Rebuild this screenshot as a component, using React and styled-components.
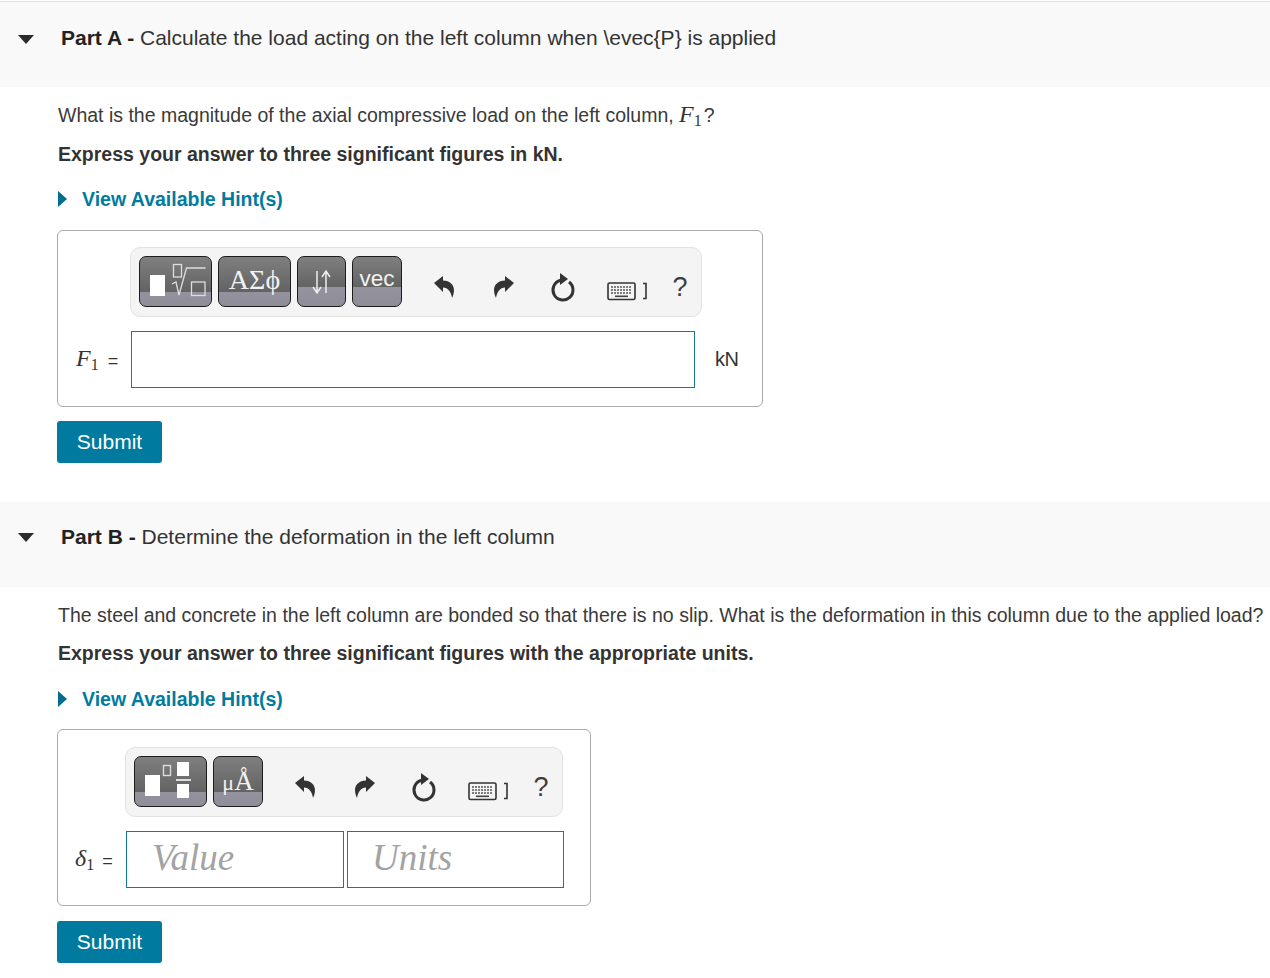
import React from "react";
import styled, { createGlobalStyle } from "styled-components";

const GlobalStyle = createGlobalStyle`
  html, body {
    margin: 0;
    padding: 0;
    background: #fff;
    font-family: "Liberation Sans", Arial, sans-serif;
    color: #333;
  }
`;

const Page = styled.div`
  width: 1270px;
  height: 978px;
  overflow: hidden;
  padding-top: 1px;
  box-sizing: border-box;
`;

const PartSection = styled.section`
  margin-bottom: ${({ $gap }) => $gap}px;
`;

const PartHeader = styled.div`
  display: flex;
  align-items: flex-start;
  height: ${({ $height }) => $height}px;
  box-sizing: border-box;
  padding: ${({ $top }) => $top}px 0 0 18px;
  background: #f9f9f9;
  border-top: ${({ $line }) => ($line ? "1px solid #e2e2e2" : "none")};
`;

const Caret = styled.span`
  width: 0;
  height: 0;
  margin: ${({ $caretTop }) => $caretTop}px 27px 0 0;
  border-left: 8.5px solid transparent;
  border-right: 8.5px solid transparent;
  border-top: 9px solid #2b2b2b;
`;

const PartTitle = styled.h2`
  margin: 0;
  font-size: 21px;
  line-height: 26px;
  font-weight: 400;
  color: #333;
  b {
    color: #222;
  }
`;

const PartBody = styled.div`
  padding: 14px 0 0 57px;
`;

const Prompt = styled.p`
  margin: 0 0 0 1px;
  height: ${({ $height }) => $height}px;
  font-size: 19.5px;
  line-height: 28px;
  white-space: nowrap;
  color: #3a3a3a;
`;

const Instruction = styled.p`
  margin: 0 0 0 1px;
  height: ${({ $height }) => $height}px;
  font-size: 19.5px;
  line-height: 28px;
  font-weight: 700;
  color: #333;
`;

const HintLink = styled.div`
  display: flex;
  align-items: center;
  height: 28px;
  margin: 0 0 ${({ $after }) => $after}px 1px;
  font-size: 19.5px;
  font-weight: 700;
  color: #007c9f;
  &::before {
    content: "";
    width: 0;
    height: 0;
    margin-right: 15px;
    border-top: 8px solid transparent;
    border-bottom: 8px solid transparent;
    border-left: 9px solid #006d8f;
  }
`;

const AnswerBox = styled.div`
  width: ${({ $width }) => $width}px;
  height: 177px;
  box-sizing: border-box;
  padding: ${({ $top }) => $top}px 0 0 ${({ $left }) => $left}px;
  border: 1px solid #a9a9a9;
  border-radius: 6px;
`;

const Toolbar = styled.div`
  display: flex;
  align-items: flex-start;
  width: ${({ $width }) => $width}px;
  height: 70px;
  box-sizing: border-box;
  padding: 8px 0 0 8px;
  margin: 0 0 14px ${({ $indent }) => $indent}px;
  background: #f4f4f4;
  border: 1px solid #e2e2e2;
  border-radius: 10px;
`;

const ToolGroup = styled.div`
  display: flex;
  gap: 6px;
  margin-right: 12px;
`;

const ToolButton = styled.div`
  display: flex;
  flex: none;
  align-items: center;
  justify-content: center;
  width: ${({ $width }) => $width}px;
  height: 51px;
  box-sizing: border-box;
  border: 1px solid #1d1d1d;
  border-radius: 7px;
  color: #f2f2f2;
  background: linear-gradient(
    to bottom,
    #7f7f7f 0,
    #636363 ${({ $split }) => $split}px,
    #94929e ${({ $split }) => $split}px,
    #8f8d98 100%
  );
`;

const ButtonText = styled.span`
  padding-bottom: ${({ $lift }) => $lift}px;
  font-family: ${({ $sans }) => ($sans ? '"Liberation Sans", sans-serif' : '"Liberation Serif", serif')};
  font-size: ${({ $size }) => $size}px;
  line-height: 1;
  small {
    font-size: 22px;
  }
`;

const ToolAction = styled.div`
  display: flex;
  flex: none;
  align-items: center;
  justify-content: center;
  width: ${({ $width }) => $width}px;
  height: 51px;
  padding-top: ${({ $drop }) => $drop}px;
  box-sizing: border-box;
  color: #3d3d3d;
  font-size: 27px;
`;

const InputRow = styled.div`
  display: flex;
  align-items: center;
`;

const MathVar = styled.span`
  margin-right: 2px;
  font-family: "Liberation Serif", serif;
  font-size: 24px;
  line-height: 0;
  font-style: italic;
  color: #333;
  sub {
    font-style: normal;
    font-size: 16px;
    line-height: 0;
    vertical-align: -4px;
  }
`;

const VarLabel = styled.div`
  display: flex;
  align-items: center;
  width: ${({ $width }) => $width}px;
  padding-top: 3px;
  box-sizing: border-box;
  span + span {
    font-family: "Liberation Sans", sans-serif;
    font-size: 18px;
    margin-left: ${({ $eqGap }) => $eqGap}px;
    color: #333;
  }
`;

const AnswerField = styled.div`
  display: flex;
  align-items: center;
  width: ${({ $width }) => $width}px;
  height: 57px;
  box-sizing: border-box;
  padding: 0 0 5px ${({ $pad }) => $pad || 0}px;
  border: 1px solid #14799a;
  margin-right: ${({ $after }) => $after || 0}px;
  font-family: "Liberation Serif", serif;
  font-style: italic;
  font-size: 37px;
  color: #a3a3a3;
`;

const UnitLabel = styled.span`
  margin-left: 20px;
  font-size: 20px;
  letter-spacing: -0.5px;
  color: #333;
`;

const SubmitButton = styled.button`
  display: block;
  width: 105px;
  height: 42px;
  margin-top: ${({ $top }) => $top}px;
  padding: 0;
  border: none;
  border-radius: 3px;
  background: #007a9e;
  color: #fff;
  font-family: "Liberation Sans", sans-serif;
  font-size: 21px;
`;

const TemplatesIcon = () => (
  <svg width="71" height="49" viewBox="0 0 71 49">
    <rect x="10" y="18" width="15" height="21" fill="#fff" />
    <rect x="33.5" y="7.5" width="8" height="12.5" fill="none" stroke="#ddd" strokeWidth="1.3" />
    <path d="M32 27 L36 25 L39 38 L46.5 11 H65.5" fill="none" stroke="#ddd" strokeWidth="1.3" />
    <rect x="51.5" y="25" width="13.5" height="13.5" fill="none" stroke="#ddd" strokeWidth="1.3" />
  </svg>
);

const FractionIcon = () => (
  <svg width="71" height="49" viewBox="0 0 71 49">
    <rect x="10" y="18" width="15" height="21" fill="#fff" />
    <rect x="28.5" y="8.5" width="7" height="10" fill="none" stroke="#ddd" strokeWidth="1.4" />
    <rect x="42" y="5" width="12" height="14" fill="#fff" />
    <rect x="41" y="22" width="15" height="2" fill="#ddd" />
    <rect x="42" y="27" width="12" height="14" fill="#fff" />
  </svg>
);

const ArrowsIcon = () => (
  <svg width="22" height="26" viewBox="0 0 22 26">
    <path d="M6 2 V23 M2 18 L6 24 L10 18 M15 24 V3 M11 8 L15 2 L19 8" fill="none" stroke="#eee" strokeWidth="1.5" />
  </svg>
);

const UndoIcon = ({ flip }) => (
  <svg width="20" height="22" viewBox="0 0 20 22" transform={flip ? "scale(-1 1)" : undefined}>
    <path d="M0 7 L9 0 V4.5 C16 4.5 20 9 20 14 C20 17 19 20 18 22 C17 16 14 11.5 9 11.5 V16 Z" fill="#333" />
  </svg>
);

const ResetIcon = () => (
  <svg width="28" height="30" viewBox="0 0 28 30">
    <path d="M11.5 7.3 A10 10 0 1 0 20 9" fill="none" stroke="#333" strokeWidth="3" />
    <path d="M11 0 L19 6 L11 12 Z" fill="#333" />
  </svg>
);

const KeyboardIcon = () => (
  <svg width="42" height="30" viewBox="0 0 42 30">
    <rect x="2" y="10" width="27" height="16.5" rx="1.5" fill="#f4f4f4" stroke="#333" strokeWidth="1.6" />
    <path d="M5 14 H26 M5 17 H26 M5 20 H26" stroke="#555" strokeWidth="1.6" strokeDasharray="2 1" />
    <path d="M9 23.3 H22" stroke="#444" strokeWidth="1.6" />
    <path d="M37 10.5 H40 V25.5 H37" fill="none" stroke="#333" strokeWidth="1.6" />
  </svg>
);

const ToolActions = () => (
  <>
    <ToolAction $width={60} $drop={11}><UndoIcon /></ToolAction>
    <ToolAction $width={60} $drop={11}><UndoIcon flip /></ToolAction>
    <ToolAction $width={58} $drop={13}><ResetIcon /></ToolAction>
    <ToolAction $width={69} $drop={13}><KeyboardIcon /></ToolAction>
    <ToolAction $width={38} $drop={11}>?</ToolAction>
  </>
);

export default function App() {
  return (
    <Page>
      <GlobalStyle />
      <PartSection $gap={39}>
        <PartHeader $height={86} $top={23} $line>
          <Caret $caretTop={10} />
          <PartTitle><b>Part A -</b> Calculate the load acting on the left column when \evec&#123;P&#125; is applied</PartTitle>
        </PartHeader>
        <PartBody>
          <Prompt $height={39}>
            What is the magnitude of the axial compressive load on the left column,{" "}
            <MathVar>F<sub>1</sub></MathVar>?
          </Prompt>
          <Instruction $height={45}>Express your answer to three significant figures in kN.</Instruction>
          <HintLink $after={17}>View Available Hint(s)</HintLink>
          <AnswerBox $width={706} $left={18} $top={16}>
            <Toolbar $width={572} $indent={54}>
              <ToolGroup>
                <ToolButton $width={73} $split={35}><TemplatesIcon /></ToolButton>
                <ToolButton $width={73} $split={35}><ButtonText $size={28} $lift={4}>ΑΣϕ</ButtonText></ToolButton>
                <ToolButton $width={49} $split={30}><ArrowsIcon /></ToolButton>
                <ToolButton $width={50} $split={30}><ButtonText $size={22.5} $lift={4} $sans>vec</ButtonText></ToolButton>
              </ToolGroup>
              <ToolActions />
            </Toolbar>
            <InputRow>
              <VarLabel $width={55} $eqGap={7}><MathVar>F<sub>1</sub></MathVar><span>=</span></VarLabel>
              <AnswerField $width={564} />
              <UnitLabel>kN</UnitLabel>
            </InputRow>
          </AnswerBox>
          <SubmitButton $top={14}>Submit</SubmitButton>
        </PartBody>
      </PartSection>
      <PartSection $gap={0}>
        <PartHeader $height={85} $top={22}>
          <Caret $caretTop={9} />
          <PartTitle><b>Part B -</b> Determine the deformation in the left column</PartTitle>
        </PartHeader>
        <PartBody>
          <Prompt $height={38}>The steel and concrete in the left column are bonded so that there is no slip. What is the deformation in this column due to the applied load?</Prompt>
          <Instruction $height={46}>Express your answer to three significant figures with the appropriate units.</Instruction>
          <HintLink $after={16}>View Available Hint(s)</HintLink>
          <AnswerBox $width={534} $left={17} $top={17}>
            <Toolbar $width={438} $indent={50}>
              <ToolGroup>
                <ToolButton $width={73} $split={35}><FractionIcon /></ToolButton>
                <ToolButton $width={50} $split={35}><ButtonText $size={27} $lift={0}><small>μ</small>Å</ButtonText></ToolButton>
              </ToolGroup>
              <ToolActions />
            </Toolbar>
            <InputRow>
              <VarLabel $width={51} $eqGap={6}><MathVar>δ<sub>1</sub></MathVar><span>=</span></VarLabel>
              <AnswerField $width={218} $after={3} $pad={25}>Value</AnswerField>
              <AnswerField $width={217} $pad={24}>Units</AnswerField>
            </InputRow>
          </AnswerBox>
          <SubmitButton $top={15}>Submit</SubmitButton>
        </PartBody>
      </PartSection>
    </Page>
  );
}
